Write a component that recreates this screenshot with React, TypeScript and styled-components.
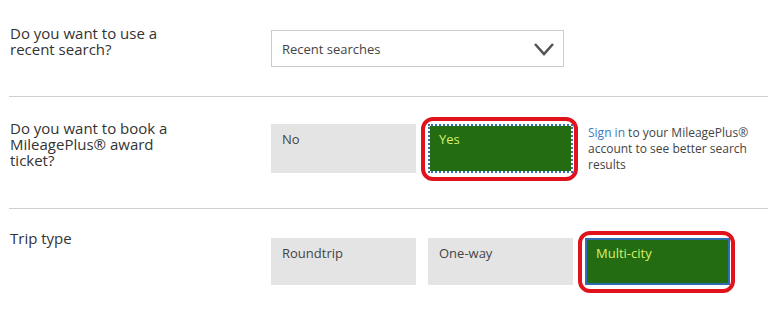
import React from 'react';
import styled, { createGlobalStyle } from 'styled-components';

const GlobalStyle = createGlobalStyle`
  body {
    margin: 0;
    background: #ffffff;
    font-family: 'Open Sans', 'Liberation Sans', sans-serif;
    color: #333333;
  }
`;

type RowProps = { $pt: number; $pb: number; $divider?: boolean };

const Page = styled.div`
  width: 768px;
  height: 312px;
  padding-left: 9px;
  box-sizing: border-box;
  overflow: hidden;
`;

const Row = styled.div<RowProps>`
  display: grid;
  grid-template-columns: 262px 1fr;
  padding: ${(p) => p.$pt}px 0 ${(p) => p.$pb}px;
  border-bottom: ${(p) => (p.$divider ? '1px solid #cfcfcf' : 'none')};
`;

const Label = styled.div`
  padding-left: 1px;
  font-size: 15px;
  line-height: 16px;
  color: #333333;
  width: 175px;
`;

const Controls = styled.div<{ $offset: number }>`
  display: flex;
  align-items: flex-start;
  gap: 12px;
  margin-top: ${(p) => p.$offset}px;
`;

const Select = styled.div`
  width: 293px;
  height: 37px;
  box-sizing: border-box;
  border: 1px solid #cccccc;
  display: flex;
  align-items: center;
  justify-content: space-between;
  padding: 0 8px 0 10px;
  font-size: 13px;
  color: #444444;
  background: #ffffff;
`;

const Option = styled.div<{ $selected?: boolean; $focused?: boolean; $h: number }>`
  position: relative;
  width: 145px;
  height: ${(p) => p.$h}px;
  box-sizing: border-box;
  padding: 4px 9px;
  font-size: 13px;
  line-height: 18px;
  color: ${(p) => (p.$selected ? '#d9f06a' : '#444444')};
  background: ${(p) => (p.$selected ? '#236c12' : '#e4e4e4')};
  background-clip: padding-box;
  border: ${(p) =>
    p.$focused ? '2px dotted #3373b5' : p.$selected ? '2px solid #2f6db3' : '2px solid #e4e4e4'};

  &::after {
    content: '';
    display: ${(p) => (p.$selected ? 'block' : 'none')};
    position: absolute;
    inset: -9px -7px -10px -9px;
    border: 4px solid #e0121b;
    border-radius: 12px;
    pointer-events: none;
  }
`;

const Note = styled.div`
  margin-left: 3px;
  margin-top: 1px;
  width: 172px;
  font-size: 12px;
  line-height: 16px;
  color: #444444;

  a {
    color: #3b7cc0;
    text-decoration: none;
  }
`;

const Chevron = () => (
  <svg width="22" height="14" viewBox="0 0 22 14">
    <polyline points="2,2 11,12 20,2" fill="none" stroke="#555555" strokeWidth="2.6" />
  </svg>
);

export default function App() {
  return (
    <Page>
      <GlobalStyle />
      <Row $pt={25} $pb={29} $divider>
        <Label>Do you want to use a recent search?</Label>
        <Controls $offset={5}>
          <Select>
            <span>Recent searches</span>
            <Chevron />
          </Select>
        </Controls>
      </Row>
      <Row $pt={23} $pb={35} $divider>
        <Label>Do you want to book a MileagePlus® award ticket?</Label>
        <Controls $offset={4}>
          <Option $h={49}>No</Option>
          <Option $h={49} $selected $focused>
            Yes
          </Option>
          <Note>
            <a href="#">Sign in</a> to your MileagePlus® account to see better search results
          </Note>
        </Controls>
      </Row>
      <Row $pt={21} $pb={0}>
        <Label>Trip type</Label>
        <Controls $offset={8}>
          <Option $h={47}>Roundtrip</Option>
          <Option $h={47}>One-way</Option>
          <Option $h={47} $selected>
            Multi-city
          </Option>
        </Controls>
      </Row>
    </Page>
  );
}
